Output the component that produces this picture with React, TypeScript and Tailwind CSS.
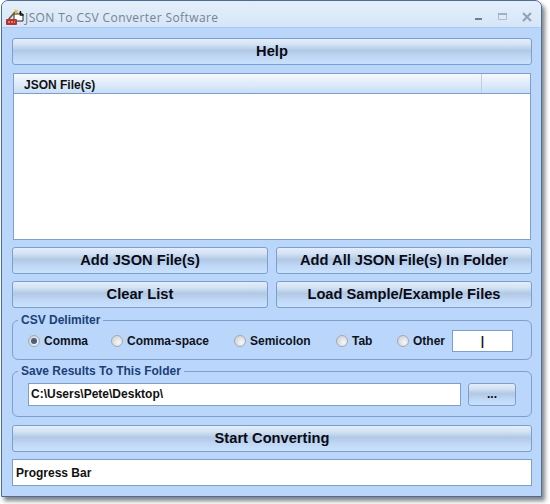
const FONT = "font-['Liberation_Sans',Arial,sans-serif]";
const BTN =
  'flex items-center justify-center rounded-[3px] border border-[#7f9fcb] bg-[linear-gradient(#e4eefb_0%,#d3e2f5_22%,#b2c9e4_46%,#bfd8f6_72%,#c9e1fc_100%)] pb-[1px] font-bold text-[14.67px] text-[#0a0a14]';

const RADIOS = [
  { label: 'Comma', width: 'w-[83px]', checked: true },
  { label: 'Comma-space', width: 'w-[123px]', checked: false },
  { label: 'Semicolon', width: 'w-[102px]', checked: false },
  { label: 'Tab', width: 'w-[61px]', checked: false },
  { label: 'Other', width: 'w-[55px]', checked: false },
];

function AppIcon() {
  return (
    <svg width="18" height="16" viewBox="0 0 18 16" className="shrink-0">
      <path d="M8 5h6V3l2 2h1v7H8z" fill="#fff" stroke="#222" strokeWidth="1" />
      <path d="M14.5 2v4h3" fill="none" stroke="#111" strokeWidth="1.4" />
      <path d="M2 11L9 3" stroke="#6b5a3a" strokeWidth="1.6" />
      <path d="M9 0l1.2 1.2L12 .6 11.4 2.4 12.6 4l-2.1-.2L9.4 5.2 9 3 7.2 2.2l1.6-.5z" fill="#f0b93a" />
      <rect x="0" y="10" width="11" height="6" rx="1" fill="#b5332e" />
      <path d="M2 13h7" stroke="#f3c9c5" strokeWidth="1.2" strokeDasharray="2 1" />
    </svg>
  );
}

function Radio({ checked }: { checked: boolean }) {
  return (
    <span className="flex size-[12px] items-center justify-center rounded-full border border-[#a3a9b1] bg-[radial-gradient(circle_at_65%_65%,#f6f7f8,#c6cacf)]">
      {checked && <span className="size-[6px] rounded-full bg-[#4c5f7c]" />}
    </span>
  );
}

function Group({ title, className, children }: { title: string; className: string; children: React.ReactNode }) {
  return (
    <fieldset className={`rounded-[6px] border border-[#7f9fcb] ${className}`}>
      <legend className="ml-[5px] px-[3px] text-[12px] font-bold leading-[14px] text-[#1c3f78]">{title}</legend>
      {children}
    </fieldset>
  );
}

export default function App() {
  return (
    <div className={`${FONT} h-[504px] w-[550px] overflow-hidden bg-white`}>
      <div className="ml-[1px] flex h-[497px] w-[541px] flex-col rounded-t-[7px] border border-[#4f6c93] bg-[#bad7fb] shadow-[3px_4px_4px_rgba(40,50,60,0.6)]">
        <div className="flex h-[27px] shrink-0 items-center rounded-t-[6px] border-b border-[#a9c9ef] bg-[linear-gradient(#e4eefa,#d6e6f8)] pl-[4px] pr-[9px] pt-[5px]">
          <AppIcon />
          <span className="ml-[1px] mt-[2px] font-['Open_Sans',sans-serif] text-[12px] tracking-[0.41px] text-[#76838f]">
            JSON To CSV Converter Software
          </span>
          <div className="ml-auto flex items-center gap-[15px]">
            <svg width="9" height="10" viewBox="0 0 9 10"><rect x="1" y="6" width="7" height="2" fill="#6d7f95" /></svg>
            <svg width="9" height="10" viewBox="0 0 9 10"><path d="M.5 1.5h8v6h-8z" fill="#dfeaf7" stroke="#aabbcf" /><path d="M0 2h9" stroke="#9fb1c7" strokeWidth="2" /></svg>
            <svg width="10" height="10" viewBox="0 0 10 10"><path d="M1 1l8 8M9 1l-8 8" stroke="#8ea2ba" strokeWidth="2" /></svg>
          </div>
        </div>
        <div className="flex flex-1 flex-col pl-[10px] pr-[9px] pt-[10px]">
          <button className={`${BTN} h-[27px] w-[520px] shrink-0`}>Help</button>
          <div className="ml-[1px] mt-[8px] h-[167px] w-[518px] shrink-0 border border-[#7f9fcb] bg-white">
            <div className="flex h-[20px] border-b border-[#7f9fcb] bg-[linear-gradient(#f6f9fe,#c9def7)] text-[12px] font-bold text-[#111]">
              <span className="flex w-[468px] items-center border-r border-[#b9cfe8] pl-[10px] pt-[2px]">JSON File(s)</span>
            </div>
          </div>
          <div className="mt-[7px] grid w-[520px] grid-cols-[256px_256px] gap-x-[8px] gap-y-[7px]">
            <button className={`${BTN} h-[27px]`}>Add JSON File(s)</button>
            <button className={`${BTN} h-[27px]`}>Add All JSON File(s) In Folder</button>
            <button className={`${BTN} h-[27px]`}>Clear List</button>
            <button className={`${BTN} h-[27px]`}>Load Sample/Example Files</button>
          </div>
          <Group title="CSV Delimiter" className="mt-[5px] h-[47px] w-[520px]">
            <div className="ml-[15px] mt-[3px] flex h-[22px] items-center text-[12px] font-bold text-[#10131c]">
              {RADIOS.map((r) => (
                <label key={r.label} className={`flex items-center gap-[4px] pb-[1px] ${r.width}`}>
                  <Radio checked={r.checked} />
                  {r.label}
                </label>
              ))}
              <div className="flex h-[22px] w-[61px] items-center justify-center border border-[#7f9fcb] bg-white">|</div>
            </div>
          </Group>
          <Group title="Save Results To This Folder" className="mt-[4px] h-[53px] w-[520px]">
            <div className="ml-[15px] mt-[5px] flex gap-[7px]">
              <div className="flex h-[23px] w-[433px] items-center border border-[#7f9fcb] bg-white pb-[1px] pl-[2px] text-[12px] font-bold text-[#111]">
                C:\Users\Pete\Desktop\
              </div>
              <button className={`${BTN} h-[23px] w-[48px] !text-[12px]`}>...</button>
            </div>
          </Group>
          <button className={`${BTN} mt-[8px] h-[27px] w-[520px] shrink-0`}>Start Converting</button>
          <div className="mt-[7px] flex h-[27px] w-[520px] shrink-0 items-center border border-[#7f9fcb] bg-white pl-[3px] text-[12px] font-bold text-[#111]">
            Progress Bar
          </div>
        </div>
      </div>
    </div>
  );
}
